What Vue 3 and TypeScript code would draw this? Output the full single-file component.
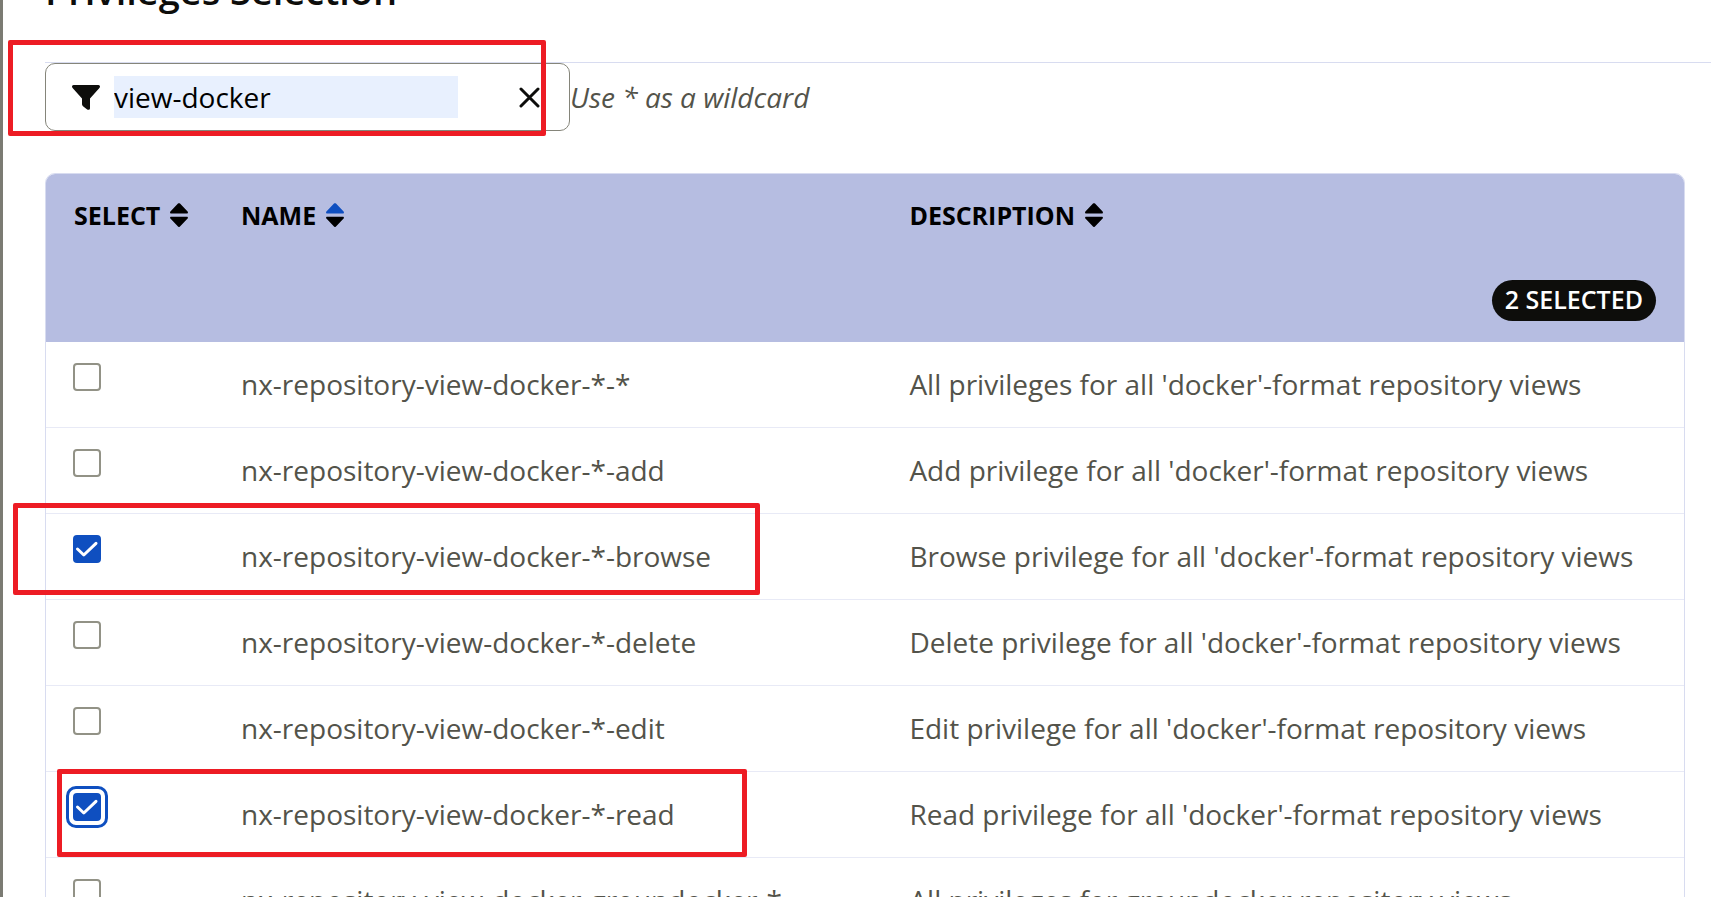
<script setup lang="ts">
import { reactive, ref, computed } from 'vue'

interface Privilege {
  name: string
  description: string
  selected: boolean
  focused?: boolean
}

interface Column {
  key: string
  label: string
  sorted: boolean
}

const filter = ref('view-docker')

const columns: Column[] = [
  { key: 'select', label: 'Select', sorted: false },
  { key: 'name', label: 'Name', sorted: true },
  { key: 'description', label: 'Description', sorted: false },
]

const privileges = reactive<Privilege[]>([
  { name: 'nx-repository-view-docker-*-*', description: "All privileges for all 'docker'-format repository views", selected: false },
  { name: 'nx-repository-view-docker-*-add', description: "Add privilege for all 'docker'-format repository views", selected: false },
  { name: 'nx-repository-view-docker-*-browse', description: "Browse privilege for all 'docker'-format repository views", selected: true },
  { name: 'nx-repository-view-docker-*-delete', description: "Delete privilege for all 'docker'-format repository views", selected: false },
  { name: 'nx-repository-view-docker-*-edit', description: "Edit privilege for all 'docker'-format repository views", selected: false },
  { name: 'nx-repository-view-docker-*-read', description: "Read privilege for all 'docker'-format repository views", selected: true, focused: true },
  { name: 'nx-repository-view-docker-groundocker-*', description: 'All privileges for groundocker repository views', selected: false },
])

const selectedCount = computed(() => privileges.filter((p) => p.selected).length)
</script>

<template>
  <main class="page">
    <h2 class="title">Privileges Selection</h2>
    <div class="filter-bar">
      <div class="filter-box">
        <svg class="funnel" viewBox="0 0 28 25" aria-hidden="true">
          <path d="M1.6 0H26.4C28 0 28.5 1.8 27.4 3L18 13.6V23.2C18 24.8 16.3 25.3 15.2 24.4L11 21.2C10.4 20.7 10 20 10 19.2V13.6L.6 3C-.5 1.8 0 0 1.6 0Z" />
        </svg>
        <input v-model="filter" class="filter-input" type="text" aria-label="Filter privileges" />
        <button class="clear" type="button" aria-label="Clear filter" @click="filter = ''">
          <svg viewBox="0 0 22 22" aria-hidden="true"><path d="M2 3L19 20M19 3L2 20" /></svg>
        </button>
      </div>
      <span class="hint">Use * as a wildcard</span>
    </div>

    <div class="table-frame">
      <table class="table">
        <colgroup>
          <col class="col-select" />
          <col />
          <col class="col-description" />
        </colgroup>
        <thead>
          <tr>
            <th v-for="c in columns" :key="c.key" scope="col">
              <button class="sort" type="button">
                {{ c.label }}
                <svg viewBox="0 0 18 24" aria-hidden="true">
                  <path :class="{ active: c.sorted }" d="M1.2 10.5H16.8C17.9 10.5 18.3 9.3 17.6 8.6L10 .6C9.4 0 8.6 0 8 .6L.4 8.6C-.3 9.3 .1 10.5 1.2 10.5Z" />
                  <path d="M1.2 13.7H16.8C17.9 13.7 18.3 14.9 17.6 15.6L10 23.6C9.4 24.2 8.6 24.2 8 23.6L.4 15.6C-.3 14.9 .1 13.7 1.2 13.7Z" />
                </svg>
              </button>
            </th>
          </tr>
          <tr>
            <th class="summary" colspan="3"><span class="badge">{{ selectedCount }} Selected</span></th>
          </tr>
        </thead>
        <tbody>
          <tr v-for="p in privileges" :key="p.name">
            <td class="check-cell">
              <label class="check" :class="{ focused: p.focused }">
                <input v-model="p.selected" type="checkbox" :aria-label="p.name" />
                <svg v-if="p.selected" viewBox="0 0 28 28" aria-hidden="true"><path d="M4.5 14L10.8 20L23 8.3" /></svg>
              </label>
            </td>
            <td>{{ p.name }}</td>
            <td>{{ p.description }}</td>
          </tr>
        </tbody>
      </table>
    </div>

    <div class="mark mark-filter"></div>
    <div class="mark mark-browse"></div>
    <div class="mark mark-read"></div>
  </main>
</template>

<style>
html,
body {
  margin: 0;
  background: #fff;
}
#app {
  height: 100vh;
  overflow: hidden;
}
</style>

<style scoped>
* {
  box-sizing: border-box;
}
.page {
  position: relative;
  min-height: 100vh;
  padding: 0 11px 0 42px;
  border-left: 3px solid #7b7b73;
  overflow: hidden;
  color: #53534a;
  font: 28px/40px "Open Sans", "Noto Sans", sans-serif;
}
.title {
  margin: -34px 0 0;
  padding-bottom: 48px;
  border-bottom: 1px solid #d8dcf0;
  color: #0d0d0b;
  font-size: 38px;
  font-weight: 600;
  line-height: 48px;
}
.filter-bar {
  display: flex;
  align-items: center;
}
.filter-box {
  display: flex;
  align-items: center;
  width: 525px;
  height: 68px;
  padding: 0 28px 0 26px;
  border: 1px solid #85857a;
  border-radius: 10px;
}
.funnel {
  width: 28px;
  height: 25px;
  margin-right: 14px;
  fill: #0d0d0b;
}
.filter-input {
  width: 344px;
  height: 42px;
  padding: 0;
  border: 0;
  outline: 0;
  background: #e8f0fe;
  color: #000;
  font: inherit;
}
.clear {
  display: flex;
  margin-left: auto;
  padding: 0;
  border: 0;
  background: none;
}
.clear svg {
  width: 22px;
  height: 22px;
  fill: none;
  stroke: #0d0d0b;
  stroke-width: 3;
  stroke-linecap: round;
}
.hint {
  font-style: italic;
}
.table-frame {
  margin: 42px 26px 0 0;
  border: 1px solid #d8dcf0;
  border-radius: 10px;
  overflow: hidden;
}
.table {
  width: 100%;
  table-layout: fixed;
  border-collapse: separate;
  border-spacing: 0;
}
.col-select {
  width: 167px;
}
.col-description {
  width: 49%;
}
th {
  height: 84px;
  padding: 23px 28px 25px;
  background: #b6bde1;
  text-align: left;
  vertical-align: top;
}
.sort {
  display: flex;
  align-items: center;
  gap: 10px;
  padding: 0;
  border: 0;
  background: none;
  color: #000;
  font: 700 25px/36px "Open Sans", "Noto Sans", sans-serif;
  text-transform: uppercase;
}
.sort svg {
  width: 18px;
  height: 24px;
}
.sort .active {
  fill: #0f4fc0;
}
th.summary {
  padding: 22px 28px 21px;
  text-align: right;
}
.badge {
  display: block;
  width: fit-content;
  margin-left: auto;
  padding: 0 13px 3px;
  border-radius: 21px;
  background: #0d0d0b;
  color: #fff;
  font-size: 25px;
  font-weight: 600;
  line-height: 38px;
  text-transform: uppercase;
}
td {
  padding: 22px 28px 23px;
  border-bottom: 1px solid #e8eaf6;
  vertical-align: top;
  white-space: nowrap;
}
td.check-cell {
  padding: 21px 27px;
}
.check {
  display: grid;
  width: 28px;
  height: 28px;
  border-radius: 3px;
}
.check > * {
  grid-area: 1 / 1;
}
.check input {
  appearance: none;
  width: 28px;
  height: 28px;
  margin: 0;
  border: 2px solid #929286;
  border-radius: 4px;
  background: #fff;
}
.check input:checked {
  border-color: #0f4fc0;
  background: #0f4fc0;
}
.check svg {
  width: 28px;
  height: 28px;
  fill: none;
  stroke: #fff;
  stroke-width: 3;
  stroke-linecap: round;
  stroke-linejoin: round;
  pointer-events: none;
}
.focused {
  outline: 3px solid #0f4fc0;
  outline-offset: 4px;
}
.mark {
  position: absolute;
  border: 5px solid #ed1c24;
  border-radius: 2px;
  pointer-events: none;
}
.mark-filter {
  top: 40px;
  left: 5px;
  width: 538px;
  height: 96px;
}
.mark-browse {
  top: 503px;
  left: 10px;
  width: 747px;
  height: 92px;
}
.mark-read {
  top: 769px;
  left: 54px;
  width: 690px;
  height: 88px;
}
</style>
